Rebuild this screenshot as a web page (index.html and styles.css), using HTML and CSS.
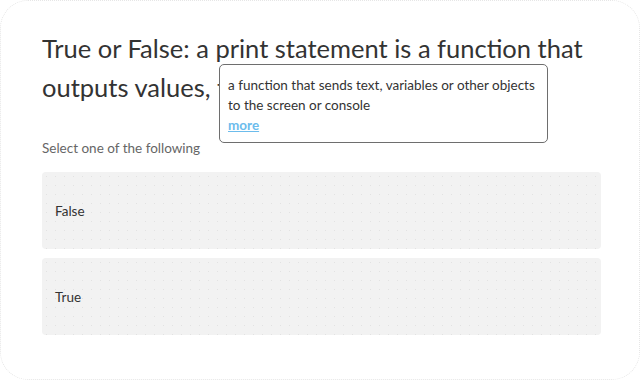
FILE: index.html
```html
<!DOCTYPE html>
<html>
<head>
<meta charset="utf-8">
<link rel="stylesheet" href="styles.css">
</head>
<body>
<div class="card">
  <h1 class="question">True or False: a print statement is a function that outputs values, true or false?</h1>
  <div class="tooltip">
    <p class="tip-text">a function that sends text, variables or other objects to the screen or console</p>
    <a class="tip-more" href="#">more</a>
  </div>
  <p class="hint">Select one of the following</p>
  <div class="options">
    <div class="option">False</div>
    <div class="option">True</div>
  </div>
</div>
</body>
</html>
```
FILE: styles.css
```css
html, body {
  margin: 0;
  padding: 0;
  background: #ffffff;
}
body {
  font-family: "Lato", "Noto Sans", sans-serif;
  color: #333333;
}
.card {
  position: relative;
  box-sizing: border-box;
  width: 640px;
  height: 380px;
  border: 1px dotted #e6e6e6;
  border-radius: 28px;
  padding: 28px 30px 0 41px;
  overflow: hidden;
}
.question {
  margin: 0;
  font-size: 25.5px;
  line-height: 39px;
  font-weight: 400;
  color: #333333;
  height: 78px;
  overflow: hidden;
}
.tooltip {
  position: absolute;
  left: 218px;
  top: 63px;
  box-sizing: border-box;
  width: 329px;
  height: 79px;
  background: #ffffff;
  border: 1px solid #6e6e6e;
  border-radius: 5px;
  padding: 10px 10px 0 8px;
}
.tip-text {
  margin: 0;
  font-size: 13.5px;
  line-height: 20px;
  color: #333333;
}
.tip-more {
  display: block;
  font-size: 13.5px;
  line-height: 20px;
  font-weight: 700;
  color: #6cbcec;
  text-decoration: underline;
}
.hint {
  margin: 31px 0 0 0;
  font-size: 13.5px;
  line-height: 20px;
  color: #666666;
}
.options {
  margin-top: 14px;
  margin-right: 8px;
  display: flex;
  flex-direction: column;
  gap: 9px;
}
.option {
  box-sizing: border-box;
  height: 77px;
  background-color: #f2f2f2;
  background-image: radial-gradient(#e2e2e2 0.6px, transparent 0.8px);
  background-size: 9px 9px;
  border-radius: 4px;
  display: flex;
  align-items: center;
  padding: 0 13px;
  font-size: 13.5px;
  color: #333333;
}
```
